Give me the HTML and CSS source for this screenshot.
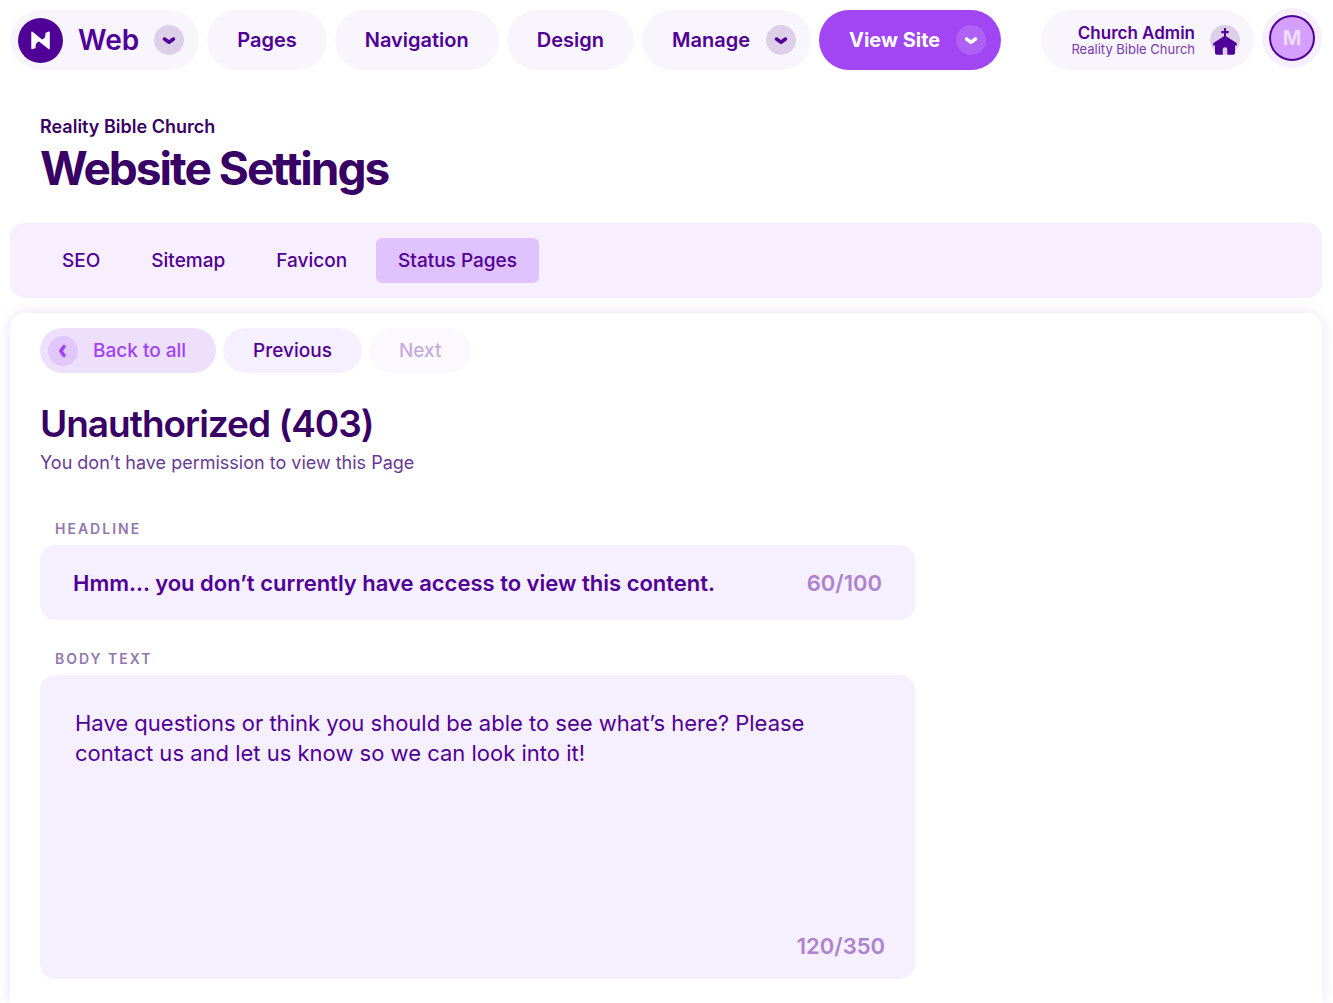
FILE: index.html
```html
<!DOCTYPE html>
<html lang="en">
	<head>
		<meta charset="utf-8" />
		<meta name="viewport" content="width=device-width, initial-scale=1">
		<title>Website Settings</title>
		<link rel="stylesheet" href="styles.css">
	</head>
	<body>
		<header class="topbar">
			<button class="pill brand" type="button">
				<svg class="logo" viewBox="0 0 45 45">
					<circle cx="22.5" cy="22.5" r="22.5" fill="#500096"/>
					<path d="M13.300 14.500 Q13.300 13 14.600 13.800 L24 21.400 Q27.400 20.500 27.400 17 V15 L30.800 13.600 Q31.800 13.300 31.800 14.500 V30.300 Q31.800 31.800 30.500 31 L21 23.500 Q17.600 24.500 17.600 28 V29.900 L14.300 31.300 Q13.300 31.500 13.300 30.500 Z" fill="#fff"/>
				</svg>
				<span class="brand-name">Web</span>
				<svg class="chevron" viewBox="0 0 30 30">
					<circle cx="15" cy="15" r="15"/>
					<path d="M10.5 14 L15 17.2 L19.5 14"/>
				</svg>
			</button>
			<nav class="menu">
				<a class="pill" href="#">Pages</a>
				<a class="pill" href="#">Navigation</a>
				<a class="pill" href="#">Design</a>
				<button class="pill has-chevron" type="button">Manage
					<svg class="chevron" viewBox="0 0 30 30">
						<circle cx="15" cy="15" r="15"/>
						<path d="M10.5 14 L15 17.2 L19.5 14"/>
					</svg>
				</button>
				<button class="pill has-chevron view-site" type="button">View Site
					<svg class="chevron" viewBox="0 0 30 30">
						<circle cx="15" cy="15" r="15"/>
						<path d="M10.5 14 L15 17.2 L19.5 14"/>
					</svg>
				</button>
			</nav>
			<button class="pill account" type="button">
				<span class="account-text">
					<span class="account-role">Church Admin</span>
					<span class="account-name">Reality Bible Church</span>
				</span>
				<svg class="church" viewBox="0 0 30 30">
					<circle cx="15" cy="15" r="15" fill="#decfe9"/>
					<path d="M14 3h2v3h2.700v2.200H16v3L26.600 18 27 20.500h-2V28.500l-1.500 1.300H17.300V24.500a2.300 2.300 0 0 0-4.600 0v5.300H6.500L5 28.500v-8H3L3.400 18 14 11.200v-3h-2.700V6H14z" fill="#500096"/>
				</svg>
			</button>
			<button class="avatar" type="button"><span>M</span></button>
		</header>

		<div class="page-head">
			<p class="site-name">Reality Bible Church</p>
			<h1>Website Settings</h1>
		</div>

		<nav class="tabs">
			<a href="#">SEO</a>
			<a href="#">Sitemap</a>
			<a href="#">Favicon</a>
			<a class="active" href="#">Status Pages</a>
		</nav>

		<main class="panel">
			<div class="pager">
				<a class="btn back" href="#">
					<svg class="arrow" viewBox="0 0 30 30">
						<circle cx="15" cy="15" r="15" fill="#e1c6fb"/>
						<path d="M16 10.500 L12.800 15 L16 19.500" fill="none" stroke="#a043f3" stroke-width="3.500" stroke-linecap="round" stroke-linejoin="round"/>
					</svg>
					Back to all
				</a>
				<button class="btn" type="button">Previous</button>
				<button class="btn" type="button" disabled>Next</button>
			</div>

			<h2>Unauthorized (403)</h2>
			<p class="desc">You don’t have permission to view this Page</p>

			<form class="fields">
				<label for="headline">Headline</label>
				<div class="field">
					<input id="headline" type="text" value="Hmm... you don’t currently have access to view this content.">
					<span class="count">60/100</span>
				</div>
				<label for="body-text">Body Text</label>
				<div class="field field-area">
					<textarea id="body-text" rows="7">Have questions or think you should be able to see what’s here? Please contact us and let us know so we can look into it!</textarea>
					<span class="count">120/350</span>
				</div>
			</form>
		</main>
	</body>
</html>
```
FILE: styles.css
```css
*{
	box-sizing: border-box;
}
html,body,h1,h2,p{
	margin: 0;
	padding: 0;
}
body{
	min-height: 100vh;
	display: flex;
	flex-direction: column;
	background: #fff;
	color: #500096;
	font-family: Inter, "Liberation Sans", sans-serif;
}
a{text-decoration: none;color: inherit;}
button,input,textarea{
	font: inherit;
	color: inherit;
	border: 0;
	outline: 0;
	background: none;
}
button{cursor: pointer;}

/* top bar */
.topbar{
	display: flex;
	gap: 8px;
	padding: 10px 11px 0 10px;
}
.menu{
	display: flex;
	gap: 8px;
}
.pill{
	display: flex;
	align-items: center;
	height: 60px;
	padding: 0 30px;
	border-radius: 30px;
	background: #f8f5fc;
	font-size: 20px;
	font-weight: 600;
	white-space: nowrap;
}
.brand{
	gap: 15px;
	padding: 0 15px 0 8px;
}
.logo{
	width: 45px;
	height: 45px;
}
.brand-name{
	font-size: 28px;
}
.chevron{
	width: 30px;
	height: 30px;
}
.chevron circle{fill: #decfe9;}
.chevron path{
	fill: none;
	stroke: #500096;
	stroke-width: 3.5;
	stroke-linecap: round;
	stroke-linejoin: round;
}
.has-chevron{
	gap: 16px;
	padding-right: 15px;
}
.view-site{
	background: #a146f2;
	color: #fff;
	font-weight: 700;
}
.view-site .chevron circle{fill: #b061f5;}
.view-site .chevron path{stroke: #fff;}
.account{
	gap: 15px;
	margin-left: auto;
	padding: 0 14px 0 30px;
}
.account-text{
	display: flex;
	flex-direction: column;
	text-align: right;
}
.account-role{
	font-size: 17px;
	line-height: 18px;
}
.account-name{
	font-size: 13px;
	font-weight: 400;
	line-height: 15px;
	color: #7a37b4;
}
.church{
	width: 30px;
	height: 30px;
}
.avatar{
	width: 60px;
	height: 60px;
	margin-top: -2px;
	padding: 7px;
	border-radius: 50%;
	background: #f6effe;
}
.avatar span{
	display: block;
	width: 46px;
	height: 46px;
	border: 2px solid #500096;
	border-radius: 50%;
	background: #d49fff;
	color: #f0dcff;
	font-size: 20px;
	font-weight: 700;
	line-height: 42px;
}

/* page title */
.page-head{
	padding: 45px 40px 26px;
	color: #380064;
}
.site-name{
	font-size: 18px;
	font-weight: 600;
	line-height: 24px;
}
h1{
	font-size: 46px;
	font-weight: 700;
	line-height: 58px;
	letter-spacing: -2px;
}

/* tabs */
.tabs{
	display: flex;
	gap: 7px;
	margin: 0 11px 15px 10px;
	padding: 15px 30px;
	border-radius: 15px;
	background: #f7eefe;
}
.tabs a{
	padding: 0 22px;
	border-radius: 6px;
	font-size: 19px;
	font-weight: 500;
	line-height: 45px;
}
.tabs .active{background: #e0c2ff;}

/* content panel */
.panel{
	flex: 1;
	margin: 0 11px 0 10px;
	padding: 15px 30px 24px;
	border-radius: 15px 15px 0 0;
	box-shadow: 0 0 15px rgba(80, 0, 150, .12);
}
.pager{
	display: flex;
	gap: 7px;
}
.btn{
	display: flex;
	align-items: center;
	height: 45px;
	padding: 0 30px;
	border-radius: 23px;
	background: #f6effe;
	font-size: 19px;
	font-weight: 500;
}
.btn:disabled{opacity: .33;}
.back{
	gap: 15px;
	padding-left: 8px;
	background: #eedffc;
	color: #a043f3;
}
.arrow{
	width: 30px;
	height: 30px;
}
h2{
	margin-top: 26px;
	color: #380064;
	font-size: 37px;
	font-weight: 600;
	line-height: 50px;
	letter-spacing: -1px;
}
.desc{
	color: #683a92;
	font-size: 18px;
	line-height: 28px;
}

/* form */
.fields{
	max-width: 875px;
	margin-top: 43px;
}
.fields label{
	display: block;
	padding-left: 15px;
	color: #9277ae;
	font-size: 14px;
	font-weight: 600;
	line-height: 18px;
	letter-spacing: 2px;
	text-transform: uppercase;
}
.field{
	display: flex;
	align-items: center;
	height: 75px;
	margin: 7px 0 30px;
	padding: 0 33px;
	border-radius: 15px;
	background: #f6effe;
}
.field input{
	flex: 1;
	min-width: 0;
	padding: 0;
	font-size: 22px;
	font-weight: 600;
}
.count{
	color: #ad82d0;
	font-size: 22px;
	font-weight: 600;
}
.field-area{
	flex-direction: column;
	align-items: flex-end;
	height: auto;
	margin-bottom: 0;
	padding: 33px 30px 18px 35px;
}
.field textarea{
	width: 100%;
	padding: 0;
	font-size: 22px;
	line-height: 30px;
	resize: none;
}
.field-area .count{
	margin-top: 14px;
	line-height: 29px;
}
```
